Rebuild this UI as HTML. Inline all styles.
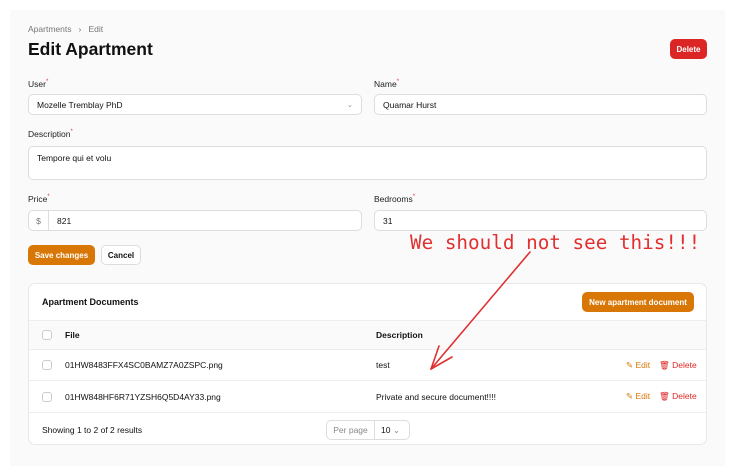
<!DOCTYPE html>
<html><head><meta charset="utf-8"><style>
*{box-sizing:border-box;margin:0;padding:0}
body{width:734px;height:476px;background:#fff;font-family:"Liberation Sans",sans-serif;color:#111;position:relative;overflow:hidden;font-size:8.5px}
.a{position:absolute}
.panel{left:10px;top:10px;width:715px;height:456px;background:#fafafa}
.lbl{font-size:8.5px;color:#222}
.lbl i{color:#e03030;font-style:normal;font-size:6px;vertical-align:top}
.inp{background:#fff;border:1px solid #ddd;border-radius:5px;font-size:8.5px;padding-left:8px;display:flex;align-items:center}
.btn{border-radius:5px;font-size:8px;font-weight:bold;display:flex;align-items:center;justify-content:center}
.row{left:0;width:679px;border-top:1px solid #eee;display:flex;align-items:center}
.cb{position:absolute;left:13px;width:10px;height:10px;border:1px solid #ccc;border-radius:3px;background:#fff}
</style></head><body>
<div class="a panel"></div>
<div class="a" style="left:28px;top:24px;font-size:8.5px;color:#777">Apartments &nbsp;&nbsp;›&nbsp;&nbsp; Edit</div>
<div class="a" style="left:28px;top:39px;font-size:17.5px;font-weight:bold">Edit Apartment</div>
<div class="a btn" style="left:670px;top:39px;width:37px;height:20px;background:#dc2626;color:#fff">Delete</div>

<div class="a lbl" style="left:28px;top:79px">User<i>*</i></div>
<div class="a inp" style="left:28px;top:94px;width:334px;height:21px">Mozelle Tremblay PhD<span style="position:absolute;right:8px;color:#888;font-size:7px">⌄</span></div>
<div class="a lbl" style="left:374px;top:79px">Name<i>*</i></div>
<div class="a inp" style="left:374px;top:94px;width:333px;height:21px">Quamar Hurst</div>

<div class="a lbl" style="left:28px;top:129px">Description<i>*</i></div>
<div class="a inp" style="left:28px;top:146px;width:679px;height:34px;align-items:flex-start;padding-top:6px">Tempore qui et volu</div>

<div class="a lbl" style="left:28px;top:194px">Price<i>*</i></div>
<div class="a inp" style="left:28px;top:210px;width:334px;height:21px;padding-left:0"><span style="width:20px;height:100%;border-right:1px solid #ddd;display:flex;align-items:center;justify-content:center;color:#777">$</span><span style="margin-left:8px">821</span></div>
<div class="a lbl" style="left:374px;top:194px">Bedrooms<i>*</i></div>
<div class="a inp" style="left:374px;top:210px;width:333px;height:21px">31</div>

<div class="a btn" style="left:28px;top:245px;width:67px;height:20px;background:#d97706;color:#fff">Save changes</div>
<div class="a btn" style="left:101px;top:245px;width:40px;height:20px;background:#fff;border:1px solid #ddd">Cancel</div>

<div class="a" style="left:28px;top:283px;width:679px;height:162px;background:#fff;border:1px solid #e8e8e8;border-radius:7px;overflow:hidden">
  <div class="a" style="left:13px;top:13px;font-size:9px;font-weight:bold">Apartment Documents</div>
  <div class="a btn" style="left:553px;top:8px;width:112px;height:20px;background:#d97706;color:#fff">New apartment document</div>
  <div class="a row" style="top:36px;height:29px;background:#fafafa"><div class="cb"></div><span class="a" style="left:36px;font-weight:bold">File</span><span class="a" style="left:347px;font-weight:bold">Description</span></div>
  <div class="a row" style="top:65px;height:31px"><div class="cb"></div><span class="a" style="left:36px">01HW8483FFX4SC0BAMZ7A0ZSPC.png</span><span class="a" style="left:347px">test</span><span class="a" style="left:597px;color:#d97706">✎ Edit</span><span class="a" style="left:630px;color:#dc2626">🗑 Delete</span></div>
  <div class="a row" style="top:96px;height:32px"><div class="cb"></div><span class="a" style="left:36px">01HW848HF6R71YZSH6Q5D4AY33.png</span><span class="a" style="left:347px">Private and secure document!!!!</span><span class="a" style="left:597px;color:#d97706">✎ Edit</span><span class="a" style="left:630px;color:#dc2626">🗑 Delete</span></div>
  <div class="a row" style="top:128px;height:34px"><span class="a" style="left:13px">Showing 1 to 2 of 2 results</span>
    <div class="a" style="left:297px;top:7px;width:84px;height:20px;border:1px solid #ddd;border-radius:5px;display:flex;align-items:center"><span style="width:48px;height:18px;text-align:center;color:#888;border-right:1px solid #ddd;line-height:18px">Per page</span><span style="margin-left:6px">10 <span style="color:#888">⌄</span></span></div>
  </div>
</div>

<div class="a" style="left:410px;top:231px;font-family:'DejaVu Sans Mono',monospace;font-size:19.3px;color:#e03030">We should not see this!!!</div>
<svg class="a" style="left:0;top:0" width="734" height="476"><g stroke="#e03030" stroke-width="1.6" fill="none" stroke-linecap="round"><line x1="530" y1="252" x2="431" y2="369"/><line x1="431" y1="369" x2="439" y2="346"/><line x1="431" y1="369" x2="452" y2="357"/></g></svg>
</body></html>
